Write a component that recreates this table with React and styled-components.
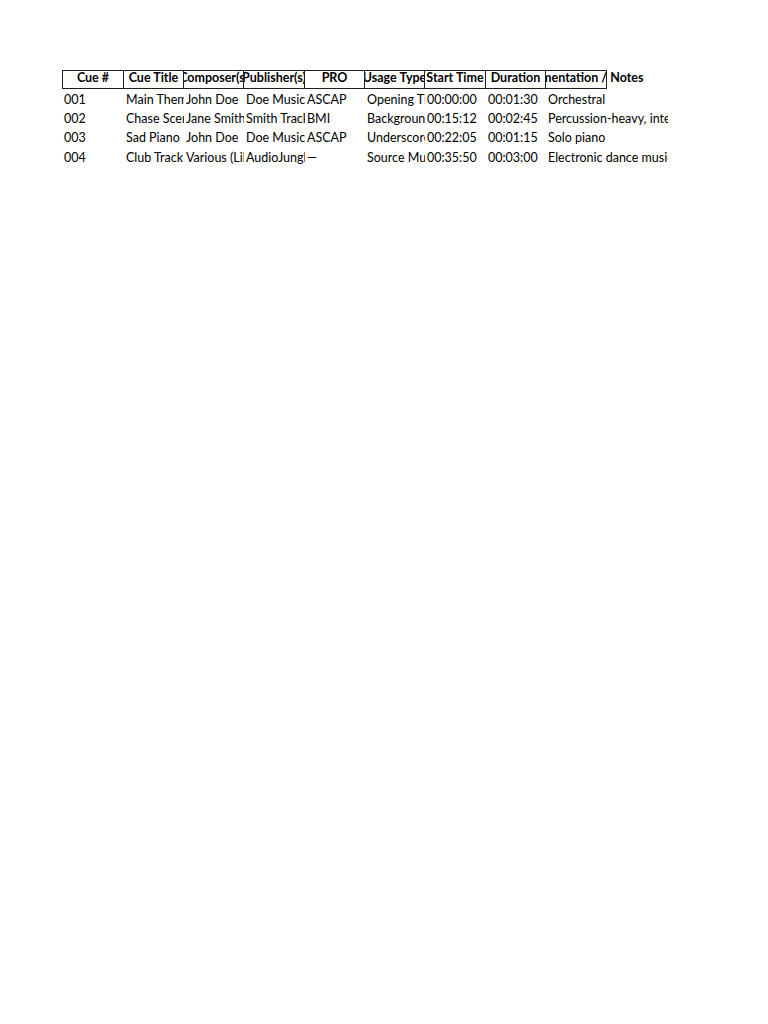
import React from 'react';
import styled, { createGlobalStyle } from 'styled-components';

const GlobalStyle = createGlobalStyle`
  html, body {
    margin: 0;
    padding: 0;
    background: #ffffff;
  }
  body {
    font-family: Lato, "Liberation Sans", sans-serif;
    color: #000;
  }
`;

const Page = styled.div`
  width: 768px;
  height: 1024px;
  padding: 70px 0 0 62px;
  box-sizing: border-box;
`;

const Sheet = styled.div`
  width: 606px;
  overflow: hidden;
  display: grid;
  grid-template-columns: 62px 60px 60px 61px 60px 60px 61px 60px 61px 1fr;
  grid-template-rows: 19px repeat(4, 19.4px);
  font-size: 12.5px;
`;

const HeadCell = styled.div`
  line-height: 14px;
  box-sizing: border-box;
  border: 1px solid #1f1f1f;
  border-left-width: ${(p) => (p.$first ? '1px' : '0')};
  font-weight: 700;
  white-space: nowrap;
  overflow: hidden;
  display: flex;
  justify-content: center;

  ${(p) =>
    p.$spill &&
    `
    overflow: visible;
    clip-path: inset(-2px -200px -2px 0);
  `}
`;

const Blank = styled.div``;

const Cell = styled.div`
  line-height: 17px;
  padding: 1.5px 0 0 2px;
  white-space: nowrap;
  overflow: ${(p) => (p.$spill ? 'visible' : 'hidden')};
`;

const headers = [
  'Cue #',
  'Cue Title',
  'Composer(s)',
  'Publisher(s)',
  'PRO',
  'Usage Type',
  'Start Time',
  'Duration',
  'Instrumentation / Notes',
];

const cues = [
  ['001', 'Main Theme', 'John Doe', 'Doe Music', 'ASCAP', 'Opening Titles', '00:00:00', '00:01:30', 'Orchestral'],
  ['002', 'Chase Scene', 'Jane Smith', 'Smith Tracks', 'BMI', 'Background', '00:15:12', '00:02:45', 'Percussion-heavy, intense'],
  ['003', 'Sad Piano', 'John Doe', 'Doe Music', 'ASCAP', 'Underscore', '00:22:05', '00:01:15', 'Solo piano'],
  ['004', 'Club Track', 'Various (Library)', 'AudioJungle', '\u2014', 'Source Music', '00:35:50', '00:03:00', 'Electronic dance music'],
];

export default function App() {
  return (
    <>
      <GlobalStyle />
      <Page>
        <Sheet>
          {headers.map((h, i) => (
            <HeadCell key={h} $first={i === 0} $spill={i === headers.length - 1}>
              <span>{h}</span>
            </HeadCell>
          ))}
          <Blank />
          {cues.map((row) => (
            <React.Fragment key={row[0]}>
              {row.map((v, i) => (
                <Cell key={i} $spill={i === row.length - 1}>
                  {v}
                </Cell>
              ))}
              <Blank />
            </React.Fragment>
          ))}
        </Sheet>
      </Page>
    </>
  );
}
